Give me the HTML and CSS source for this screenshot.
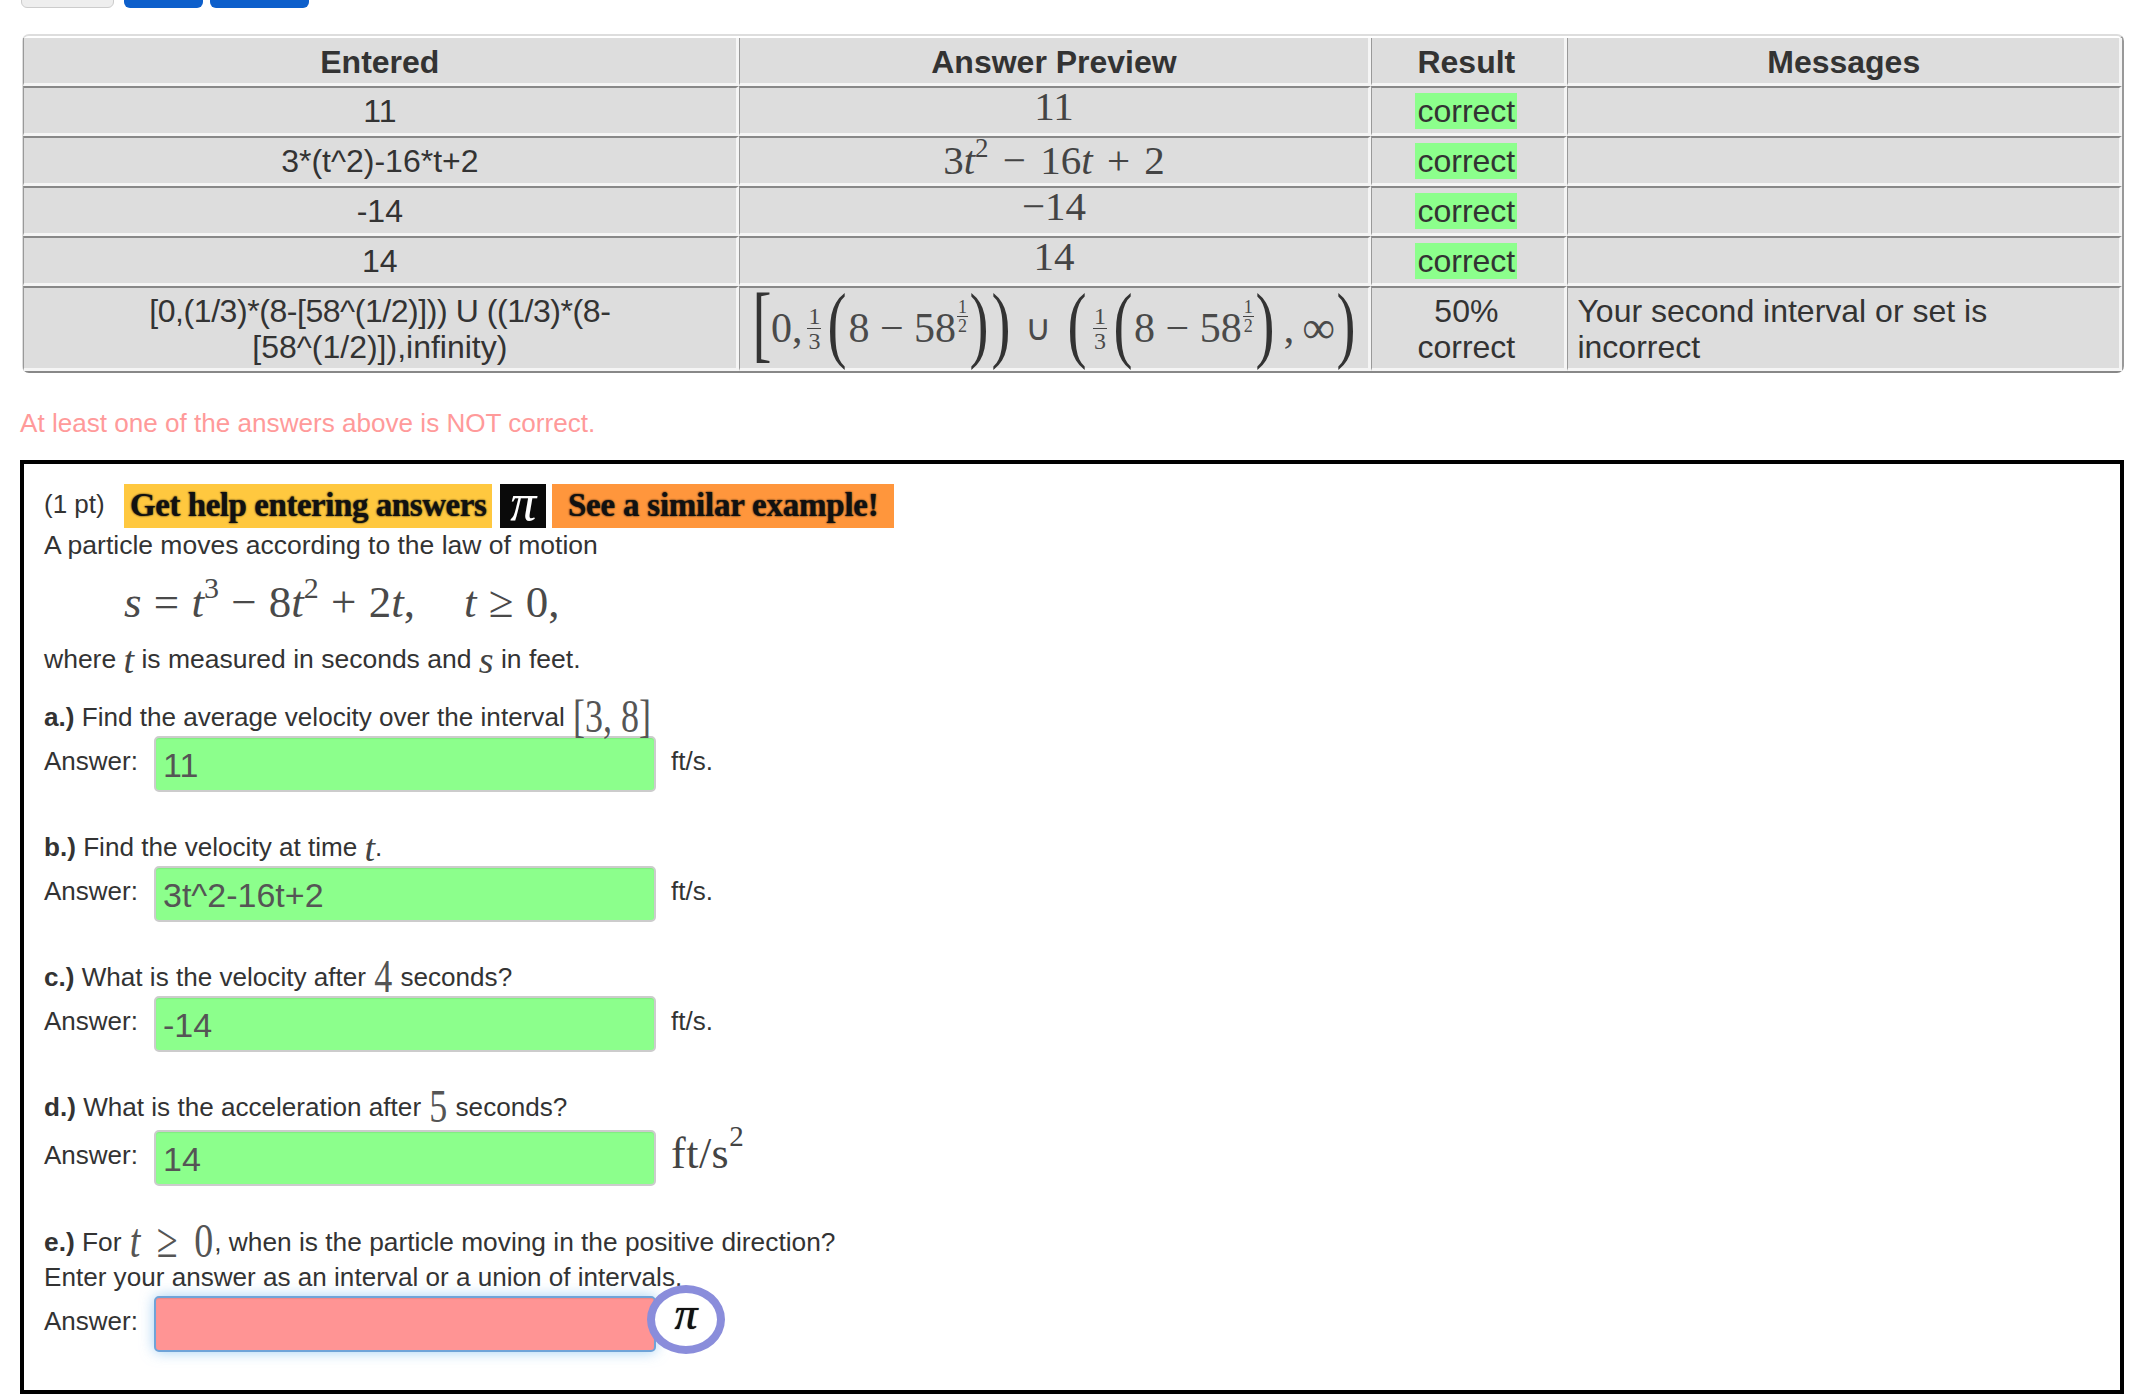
FILE: index.html
```html
<!DOCTYPE html>
<html lang="en">
<head>
<meta charset="utf-8">
<title>Particle motion problem</title>
<link rel="stylesheet" href="styles.css">
</head>
<body>
<div class="btnstrip"><span class="btn gray"></span><span class="btn blue b1"></span><span class="btn blue b2"></span></div>

<table class="results">
<colgroup><col class="c1"><col class="c2"><col class="c3"><col class="c4"></colgroup>
<tr><th>Entered</th><th>Answer Preview</th><th class="rc">Result</th><th>Messages</th></tr>
<tr><td>11</td><td><span class="m prev">11</span></td><td class="rc"><span class="ok">correct</span></td><td></td></tr>
<tr><td>3*(t^2)-16*t+2</td><td><span class="m wide">3<i>t</i><sup>2</sup> − 16<i>t</i> + 2</span></td><td class="rc"><span class="ok">correct</span></td><td></td></tr>
<tr><td>-14</td><td><span class="m prev">−14</span></td><td class="rc"><span class="ok">correct</span></td><td></td></tr>
<tr><td>14</td><td><span class="m prev">14</span></td><td class="rc"><span class="ok">correct</span></td><td></td></tr>
<tr class="last">
<td><span class="tight">[0,(1/3)*(8-[58^(1/2)])) U ((1/3)*(8-</span><br>[58^(1/2)]),infinity)</td>
<td class="bigcell"><span class="bigmath">
<span class="bd bk">[</span><span>0,</span><span class="frac"><span>1</span><span>3</span></span><span class="bd">(</span><span>8 − 58</span><span class="frac sup"><span>1</span><span>2</span></span><span class="bd">)</span><span class="bd">)</span><span class="cup">∪</span><span class="bd">(</span><span class="frac"><span>1</span><span>3</span></span><span class="bd">(</span><span>8 − 58</span><span class="frac sup"><span>1</span><span>2</span></span><span class="bd">)</span><span class="cm">,</span><span class="inf">∞</span><span class="bd">)</span>
</span></td>
<td class="rc">50%<br>correct</td>
<td class="msg">Your second interval or set is<br>incorrect</td>
</tr>
</table>

<p class="warn">At least one of the answers above is NOT correct.</p>

<div class="problem">
<div class="head">
<span class="pts">(1 pt)</span>
<span class="tag yellow">Get help entering answers</span>
<span class="tag pi">π</span>
<span class="tag orange">See a similar example!</span>
</div>
<p class="line intro">A particle moves according to the law of motion</p>
<p class="display m"><i>s</i> = <i>t</i><sup>3</sup> − 8<i>t</i><sup>2</sup> + 2<i>t</i>,<span class="quad"></span><i>t</i> ≥ 0,</p>
<p class="line where">where <i class="mv">t</i> is measured in seconds and <i class="mv">s</i> in feet.</p>

<div class="part pa">
<p class="line"><b>a.)</b> Find the average velocity over the interval <span class="mn">[3, 8]</span></p>
<div class="ans"><span class="lbl">Answer:</span><input class="field good" readonly value="11"><span class="unit">ft/s.</span></div>
</div>
<div class="part">
<p class="line"><b>b.)</b> Find the velocity at time <i class="mv">t</i>.</p>
<div class="ans"><span class="lbl">Answer:</span><input class="field good" readonly value="3t^2-16t+2"><span class="unit">ft/s.</span></div>
</div>
<div class="part">
<p class="line"><b>c.)</b> What is the velocity after <span class="mn">4</span> seconds?</p>
<div class="ans"><span class="lbl">Answer:</span><input class="field good" readonly value="-14"><span class="unit">ft/s.</span></div>
</div>
<div class="part pd">
<p class="line"><b>d.)</b> What is the acceleration after <span class="mn">5</span> seconds?</p>
<div class="ans"><span class="lbl">Answer:</span><input class="field good" readonly value="14"><span class="unit m fts">ft/s<sup>2</sup></span></div>
</div>
<div class="part pe">
<p class="line first"><b>e.)</b> For <span class="mn spaced"><i>t</i> ≥ 0</span>, when is the particle moving in the positive direction?</p>
<p class="line second">Enter your answer as an interval or a union of intervals.</p>
<div class="ans"><span class="lbl">Answer:</span><span class="fieldwrap"><input class="field bad" readonly value=""><span class="pibtn">π</span></span></div>
</div>
</div>
</body>
</html>
```
FILE: styles.css
```css
* { box-sizing: border-box; }
html, body { margin: 0; padding: 0; background: #fff; }
body {
  font-family: "Liberation Sans", Arial, sans-serif;
  font-size: 26.5px;
  color: #333;
  height: 1398px;
  overflow: hidden;
}
p { margin: 0; }

.btnstrip { display: flex; height: 8px; padding-left: 21px; overflow: hidden; align-items: flex-end; }
.btn { display: block; height: 30px; border-radius: 6px; }
.gray { width: 93px; background: #eee; border: 1px solid #ccc; }
.blue { background: #0d5fcb; }
.b1 { width: 79px; margin-left: 10px; }
.b2 { width: 99px; margin-left: 7px; }

.results {
  border-collapse: separate;
  border-spacing: 0;
  table-layout: fixed;
  width: 2102px;
  margin: 26px 0 0 22px;
  padding-top: 2px;
  font-size: 32px;
  line-height: 36px;
  text-align: center;
  border: 1px solid #ddd;
  border-top-width: 2px;
  border-bottom: 2px solid #888;
  border-right: 2px solid #999;
  border-radius: 7px;
}
.c1 { width: 715px; }
.c2 { width: 632px; }
.c3 { width: 196px; }
.c4 { width: 554px; }
.results th, .results td {
  background: #ddd;
  padding: 0 10px;
  border-bottom: 3px solid #f5f5f5;
  border-right: 3px solid #f5f5f5;
  border-left: 1px solid #999;
  font-weight: normal;
}
.results th { height: 48px; font-weight: bold; padding-top: 2px; }
.results td { height: 50px; border-top: 2px solid #888; padding-top: 0; }
.results tr.last td { height: 85px; padding-top: 2px; }
.results tr.last td.bigcell { padding-left: 0; padding-right: 0; padding-top: 0; }
.results .msg { text-align: left; padding-left: 9px; padding-right: 4px; }
.results .rc { padding-right: 12px; padding-left: 8px; }
.ok { display: inline-block; background: #8cff8c; padding: 0 2px; line-height: 36px; }
.tight { letter-spacing: -0.44px; }

.m { font-family: "Liberation Serif", "Times New Roman", serif; font-size: 41px; color: #444; }
.m sup { font-size: 27px; line-height: 0; vertical-align: 17px; }
.m.wide { word-spacing: 4px; position: relative; top: 1px; }
.prev { position: relative; top: -3px; }

.bigmath {
  display: inline-flex;
  align-items: center;
  justify-content: center;
  height: 72px;
  font-family: "Liberation Serif", "Times New Roman", serif;
  font-size: 42px;
  line-height: 1;
  color: #4a4a4a;
  white-space: pre;
  vertical-align: middle;
}
.bd { display: inline-block; font-size: 84px; line-height: 70px; margin: -8px -3px 0; color: #333; transform: scaleX(.68); }
.bd.bk { margin-right: -5px; }
.cup { margin: 0 15px 0 13px; font-size: 36px; }
.cm { margin-left: 8px; }
.inf { margin-left: 8px; font-size: 46px; }
.frac { display: inline-flex; flex-direction: column; align-items: center; font-size: 24px; line-height: 24px; margin: 0 5px; }
.frac span:first-child { border-bottom: 1px solid #444; padding: 0 1px; }
.frac.sup { font-size: 18px; line-height: 18px; margin: -24px 0 0 1px; }

.warn { margin: 32px 0 0 20px; line-height: 36px; font-size: 26.1px; color: #ff9a9a; }

.problem {
  width: 2104px;
  height: 934px;
  margin: 19px 0 0 20px;
  padding: 20px 0 0 20px;
  border: 4px solid #000;
}
.head { display: flex; align-items: stretch; height: 44px; margin-bottom: -1px; }
.pts { width: 80px; line-height: 40px; font-size: 26px; }
.tag {
  display: block;
  font-family: "Liberation Serif", "Times New Roman", serif;
  font-size: 33px;
  font-weight: bold;
  line-height: 42px;
  letter-spacing: -0.45px;
  color: #111;
  text-shadow: 0 0 2px #000;
  white-space: nowrap;
}
.yellow { width: 368px; padding-left: 6px; background: #ffc83f; }
.pi { width: 46px; margin-left: 8px; background: #0a0a0a; color: #fff; font-size: 52px; font-style: italic; line-height: 38px; text-align: center; text-shadow: none; font-weight: normal; }
.orange { width: 342px; margin-left: 6px; padding-left: 16px; background: #ff963c; letter-spacing: -0.23px; }

.line { line-height: 36px; height: 36px; white-space: nowrap; }
.line b { color: #333; }
.display { height: 63px; padding-left: 80px; padding-top: 15px; line-height: 48px; white-space: nowrap; font-size: 45px; word-spacing: 1px; color: #4a4a4a; }
.display sup { font-size: 30px; vertical-align: 19px; }
.quad { display: inline-block; width: 49px; }
.where { margin-top: 15px; }
.mv { font-family: "Liberation Serif", "Times New Roman", serif; font-size: 38px; line-height: 0; color: #444; position: relative; top: 5px; }
.mn {
  display: inline-block;
  margin: 0 1px;
  font-family: "Liberation Serif", "Times New Roman", serif;
  font-size: 36px;
  line-height: 0;
  color: #555;
  transform: translateY(2px) scaleY(1.3);
}
.mn.spaced { font-size: 38px; word-spacing: 7px; }

.part { margin-top: 36px; }
.part .line { font-size: 26.1px; padding-top: 1px; }
.part .line.first { font-size: 26.3px; }
.part.pa { margin-top: 21px; }
.ans { display: flex; align-items: flex-start; margin-top: 2px; font-size: 26px; }
.lbl { width: 110px; padding-top: 7px; line-height: 36px; }
.unit { margin-left: 15px; padding-top: 7px; line-height: 36px; }
.fts { padding-top: 8px; line-height: 44px; margin-top: -6px; white-space: nowrap; font-size: 44px; letter-spacing: .5px; }
.fts sup { font-size: 29px; vertical-align: 22px; }
.field {
  display: block;
  width: 502px;
  height: 56px;
  margin: 0;
  padding: 3px 7px 0;
  font-family: "Liberation Sans", Arial, sans-serif;
  font-size: 34px;
  color: #555;
  border: 2px solid #ccc;
  border-radius: 5px;
  outline: none;
  box-shadow: inset 0 1px 1px rgba(0,0,0,.08);
}
.good { background: #8cff8c; }
.bad { background: #ff9494; border-color: #6fa3d8; box-shadow: inset 0 1px 1px rgba(0,0,0,.08), 0 0 14px rgba(102,175,233,.6); }
.pd .ans { margin-top: 6px; }
.pe { margin-top: 37px; }
.pe .second { margin-top: -1px; }
.pe .ans { margin-top: 2px; }
.fieldwrap { position: relative; display: block; }
.pibtn {
  position: absolute;
  left: 493px;
  top: -11px;
  width: 78px;
  height: 69px;
  border: 8px solid #8a8ddb;
  border-radius: 50%;
  background: #fff;
  font-family: "Liberation Serif", "Times New Roman", serif;
  font-size: 46px;
  font-style: italic;
  line-height: 42px;
  color: #111;
  text-align: center;
  text-shadow: 0 0 1px #000;
}
```
